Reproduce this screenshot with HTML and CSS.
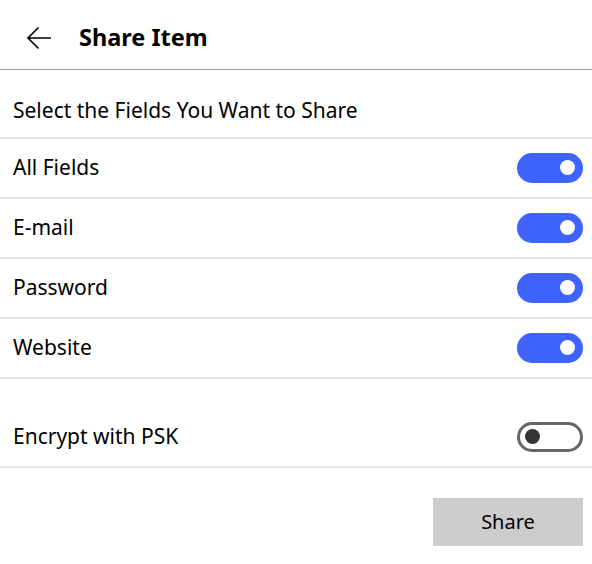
FILE: index.html
```html
<!DOCTYPE html>
<html>
<head>
<meta charset="utf-8">
<link rel="stylesheet" href="styles.css">
</head>
<body>
<div class="page">
  <header class="header">
    <svg class="back" width="26" height="24" viewBox="0 0 26 24">
      <path d="M25 12H2M12.5 1.5L2 12l10.5 10.5" fill="none" stroke="#000" stroke-width="1.6"/>
    </svg>
    <h1 class="title">Share Item</h1>
  </header>
  <div class="subtitle">Select the Fields You Want to Share</div>
  <div class="row"><span class="label">All Fields</span><span class="toggle on"></span></div>
  <div class="row"><span class="label">E-mail</span><span class="toggle on"></span></div>
  <div class="row"><span class="label">Password</span><span class="toggle on"></span></div>
  <div class="row"><span class="label">Website</span><span class="toggle on"></span></div>
  <div class="row encrypt"><span class="label">Encrypt with PSK</span><span class="toggle off"></span></div>
  <div class="actions"><button class="share">Share</button></div>
</div>
</body>
</html>
```
FILE: styles.css
```css
html, body {
  margin: 0;
  padding: 0;
  background: #fff;
}
body {
  font-family: "Noto Sans", "Open Sans", sans-serif;
  color: #000;
  font-size: 21px;
}
.header {
  height: 70px;
  box-sizing: border-box;
  padding: 8px 0 0 26px;
  display: flex;
  align-items: center;
  border-bottom: 1px solid #9a9a9a;
}
.back {
  display: block;
  margin-top: -2px;
}
.title {
  margin: -3px 0 0 27px;
  font-size: 23.5px;
  font-weight: 700;
}
.subtitle {
  height: 69px;
  box-sizing: border-box;
  padding: 12px 0 0 13px;
  display: flex;
  align-items: center;
  border-bottom: 2px solid #e6e6e6;
}
.row {
  height: 58px;
  display: flex;
  align-items: center;
  justify-content: space-between;
  padding: 0 9px 0 13px;
  border-bottom: 2px solid #e6e6e6;
}
.label {
  margin-top: -2px;
}
.row.encrypt {
  margin-top: 29px;
}
.toggle {
  width: 66px;
  height: 30px;
  box-sizing: border-box;
  border-radius: 15px;
  position: relative;
  margin-top: -1px;
}
.toggle.on {
  background: #3f63ff;
}
.toggle.on::after {
  content: "";
  position: absolute;
  right: 8px;
  top: 7.5px;
  width: 15px;
  height: 15px;
  border-radius: 50%;
  background: #fff;
}
.toggle.off {
  border: 3px solid #666;
  background: #fff;
}
.toggle.off::after {
  content: "";
  position: absolute;
  left: 5px;
  top: 4.5px;
  width: 15px;
  height: 15px;
  border-radius: 50%;
  background: #333;
}
.actions {
  display: flex;
  justify-content: flex-end;
  padding: 30px 9px 0 0;
}
.share {
  width: 150px;
  height: 48px;
  border: none;
  background: #cccccc;
  font-family: inherit;
  font-size: 20px;
  color: #000;
  padding: 0 0 2px;
}
```
